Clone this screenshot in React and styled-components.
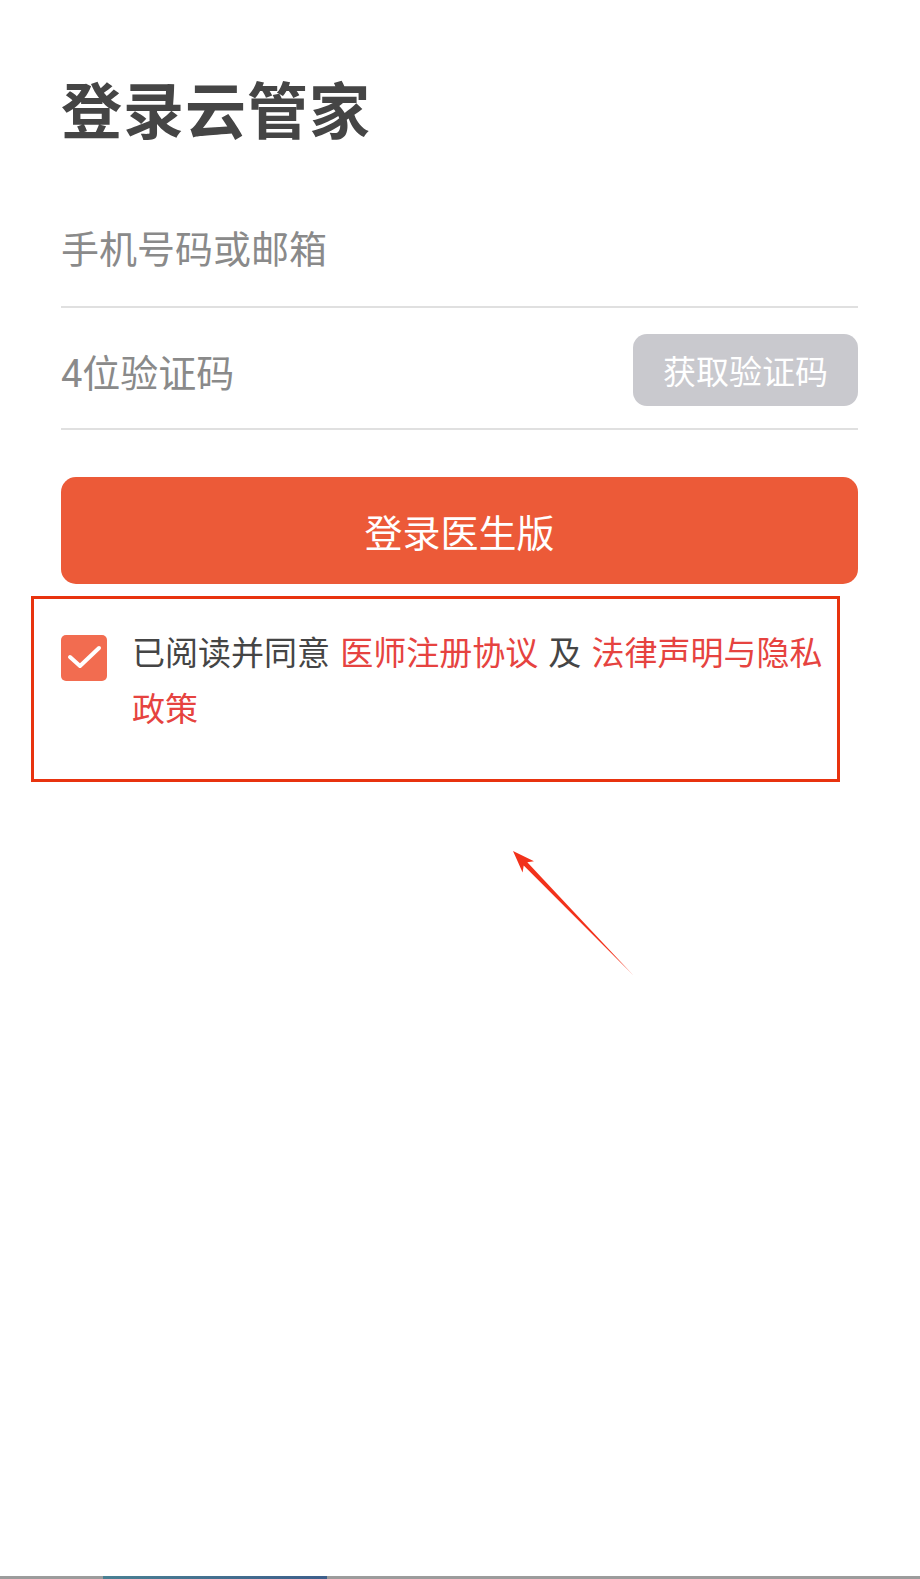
import React from "react";
import styled, { createGlobalStyle } from "styled-components";

const GlobalStyle = createGlobalStyle`
  html, body {
    margin: 0;
    padding: 0;
    background: #fff;
  }
  body {
    font-family: Roboto, "Noto Sans CJK SC", "Noto Sans", sans-serif;
    -webkit-font-smoothing: antialiased;
  }
  * {
    box-sizing: border-box;
  }
`;

const Page = styled.div`
  position: relative;
  min-height: 1579px;
  display: flex;
  flex-direction: column;
  background: #fff;
`;

const Content = styled.div`
  padding: 83px 0 0 61px;
  width: 858px;
`;

const Title = styled.h1`
  margin: 0 0 43px;
  font-size: 61px;
  line-height: 60px;
  font-weight: 700;
  color: #454545;
  letter-spacing: 1px;
`;

const Field = styled.div`
  height: 122px;
  display: flex;
  align-items: center;
  justify-content: space-between;
  border-bottom: 2px solid #e0e0e0;
`;

const Placeholder = styled.span`
  font-size: 38px;
  color: #8a8a8a;
  padding-top: ${(p) => (p.$down ? "4px" : "0")};
`;

const CodeButton = styled.button`
  width: 225px;
  height: 72px;
  border: none;
  border-radius: 14px;
  background: #c9c9ce;
  color: #fff;
  font-family: inherit;
  font-size: 33px;
  padding: 0;
  margin-top: 4px;
`;

const LoginButton = styled.button`
  display: block;
  width: 100%;
  height: 107px;
  margin-top: 47px;
  border: none;
  border-radius: 15px;
  background: #ec5a38;
  color: #fff;
  font-family: inherit;
  font-size: 38px;
  padding: 0;
`;

const AgreeBox = styled.div`
  margin: 12px 0 0 -30px;
  width: 809px;
  height: 186px;
  border: 3px solid #e8330f;
  padding: 27px 0 0 27px;
  display: flex;
  align-items: flex-start;
`;

const Check = styled.span`
  flex: none;
  width: 46px;
  height: 46px;
  margin-top: 9px;
  border-radius: 5px;
  background: #f26c50;
  display: block;
`;

const AgreeText = styled.p`
  margin: 0 0 0 25px;
  width: 705px;
  font-size: 33px;
  line-height: 56px;
  color: #454545;
  word-spacing: 2px;
`;

const Link = styled.span`
  color: #e64340;
`;

const Arrow = styled.svg`
  position: absolute;
  left: 0;
  top: 0;
  pointer-events: none;
`;

const BottomBar = styled.div`
  margin-top: auto;
  height: 3px;
  background: #9c9c9c;
  position: relative;
`;

const BarThumb = styled.div`
  position: absolute;
  left: 103px;
  top: 0;
  width: 224px;
  height: 3px;
  background: linear-gradient(90deg, #4a8093, #3e5f8b);
`;

export default function App() {
  return (
    <Page>
      <GlobalStyle />
      <Content>
        <Title>登录云管家</Title>
        <Field>
          <Placeholder>手机号码或邮箱</Placeholder>
        </Field>
        <Field>
          <Placeholder $down>4位验证码</Placeholder>
          <CodeButton>获取验证码</CodeButton>
        </Field>
        <LoginButton>登录医生版</LoginButton>
        <AgreeBox>
          <Check>
            <svg width="46" height="46" viewBox="0 0 46 46">
              <path
                d="M9 22 L19 31 L38 13"
                fill="none"
                stroke="#fff"
                strokeWidth="4"
                strokeLinecap="round"
                strokeLinejoin="round"
              />
            </svg>
          </Check>
          <AgreeText>
            已阅读并同意 <Link>医师注册协议</Link> 及 <Link>法律声明与隐私政策</Link>
          </AgreeText>
        </AgreeBox>
      </Content>

      <Arrow width="920" height="1000" viewBox="0 0 920 1000">
        <polygon
          points="513,851 522.6,872.4 523.7,865.6 633,975 527.3,862.2 534,861.2"
          fill="#f2321b"
        />
      </Arrow>

      <BottomBar>
        <BarThumb />
      </BottomBar>
    </Page>
  );
}
